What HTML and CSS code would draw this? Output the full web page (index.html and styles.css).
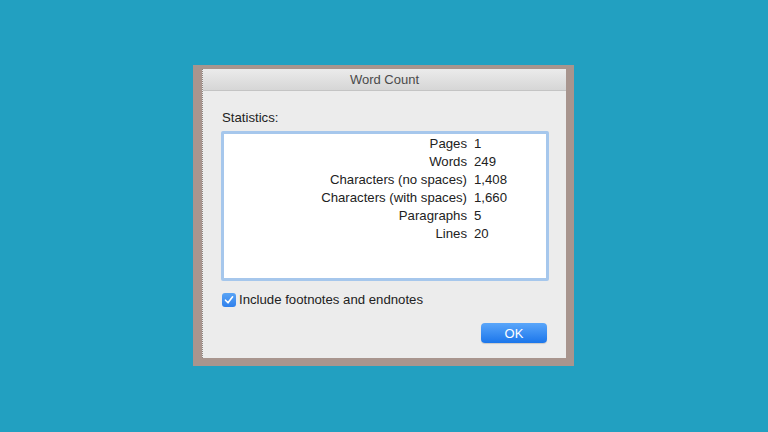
FILE: index.html
```html
<!DOCTYPE html>
<html lang="en">
<head>
    <meta charset="UTF-8">
    <meta name="viewport" content="width=device-width, initial-scale=1.0">
    <title>Word Count</title>
    <link rel="stylesheet" href="styles.css">
</head>
<body>
    <div class="frame">
        <div class="dialog">
            <div class="title-bar">Word Count</div>
            <div class="content">
                <div class="section-label">Statistics:</div>
                <div class="stats-box">
                    <div class="stat-label">Pages</div><div class="stat-value">1</div>
                    <div class="stat-label">Words</div><div class="stat-value">249</div>
                    <div class="stat-label">Characters (no spaces)</div><div class="stat-value">1,408</div>
                    <div class="stat-label">Characters (with spaces)</div><div class="stat-value">1,660</div>
                    <div class="stat-label">Paragraphs</div><div class="stat-value">5</div>
                    <div class="stat-label">Lines</div><div class="stat-value">20</div>
                </div>
                <label class="check-row">
                    <span class="checkbox">
                        <svg width="10" height="10" viewBox="0 0 10 10">
                            <path d="M1.5 5.2 L4 7.8 L8.6 1.8" fill="none" stroke="#fff" stroke-width="1.6" stroke-linecap="round" stroke-linejoin="round"/>
                        </svg>
                    </span>
                    Include footnotes and endnotes
                </label>
                <div class="buttons">
                    <button class="ok-button">OK</button>
                </div>
            </div>
        </div>
    </div>
</body>
</html>
```

FILE: styles.css
```css
body {
    margin: 0;
    width: 768px;
    height: 432px;
    background-color: #22a0c1;
    font-family: 'Liberation Sans', Arial, sans-serif;
    display: flex;
    align-items: center;
    justify-content: center;
    color: #222;
}

.frame {
    width: 381px;
    height: 301px;
    box-sizing: border-box;
    padding: 4px 8px 8px 9px;
    background-color: #a8958e;
    margin-top: -1px;
    margin-left: -1px;
}

.dialog {
    height: 100%;
    background-color: #ececec;
    border-left: 1px dotted #8f8681;
    box-sizing: border-box;
}

.title-bar {
    height: 22px;
    line-height: 21px;
    box-sizing: border-box;
    text-align: center;
    font-size: 13px;
    color: #4a4a4a;
    background: linear-gradient(#ebebeb, #d6d6d6);
    border-bottom: 1px solid #c4c4c4;
}

.content {
    padding: 19px 17px 0 19px;
}

.section-label {
    font-size: 13.2px;
    line-height: 16px;
    margin-bottom: 5px;
}

.stats-box {
    width: 328px;
    height: 150px;
    box-sizing: border-box;
    margin-left: -1px;
    padding-top: 1px;
    background-color: #fff;
    border: 3px solid #a6c7ec;
    border-radius: 2px;
    display: grid;
    grid-template-columns: 243px auto;
    column-gap: 7px;
    align-content: start;
    font-size: 13.2px;
    line-height: 18px;
}

.stat-label {
    text-align: right;
}

.check-row {
    display: flex;
    align-items: center;
    gap: 3px;
    margin-top: 12px;
    font-size: 13.2px;
    line-height: 14px;
}

.checkbox {
    width: 14px;
    height: 14px;
    border-radius: 3px;
    background: linear-gradient(#5aa4f5, #2f80ec);
    display: flex;
    align-items: center;
    justify-content: center;
}

.buttons {
    display: flex;
    justify-content: flex-end;
    margin-top: 16px;
    padding-right: 2px;
}

.ok-button {
    width: 66px;
    height: 20px;
    border: none;
    border-radius: 4px;
    background: linear-gradient(#5aa6fa, #1b76eb);
    color: #fff;
    font-family: 'Liberation Sans', Arial, sans-serif;
    font-size: 13px;
    padding: 0;
    box-shadow: 0 1px 1px rgba(0, 0, 0, 0.15);
}
```
